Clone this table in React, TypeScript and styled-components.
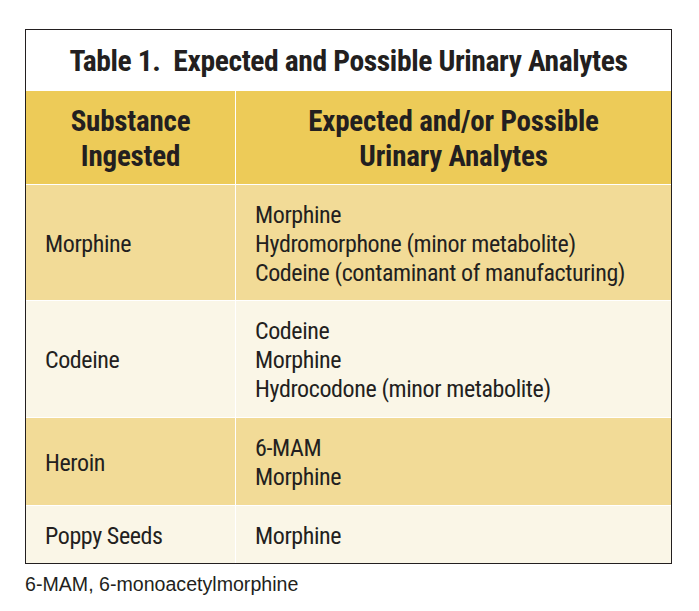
import React from "react";
import styled, { createGlobalStyle } from "styled-components";

const GlobalStyle = createGlobalStyle`
  html, body { margin: 0; padding: 0; background: #ffffff; }
  body { font-family: "Liberation Sans", Arial, sans-serif; color: #231f20; }
`;

const COND = `"Roboto Condensed", "Roboto", sans-serif`;

const Page = styled.div`
  padding: 29px 0 0 25px;
`;

const Figure = styled.div`
  width: 647px;
`;

const TableBox = styled.div`
  box-sizing: border-box;
  width: 647px;
  border: 1px solid #231f20;
  background: #ffffff;
`;

const Title = styled.div`
  height: 61px;
  display: flex;
  align-items: center;
  justify-content: center;
  font-family: ${COND};
  font-stretch: condensed;
  font-weight: 700;
  font-size: 29.6px;
  letter-spacing: -0.4px;
  white-space: pre;
  color: #231f20;
`;

const Grid = styled.div`
  display: grid;
  grid-template-columns: 209px minmax(0, 1fr);
  column-gap: 1px;
  row-gap: 1px;
  background: #ffffff;
`;

const HeadCell = styled.div`
  box-sizing: border-box;
  height: 93px;
  padding-top: 2px;
  background: #edcb58;
  display: flex;
  align-items: center;
  justify-content: center;
  text-align: center;
  font-family: ${COND};
  font-stretch: condensed;
  font-weight: 700;
  font-size: 29px;
  letter-spacing: -0.2px;
  line-height: 35px;
  color: #231f20;
`;

const Cell = styled.div<{ $h: number; $tone: "tan" | "cream" }>`
  box-sizing: border-box;
  height: ${(p) => p.$h}px;
  padding: 3px 0 0 19px;
  background: ${(p) => (p.$tone === "tan" ? "#f2db97" : "#faf6e7")};
  display: flex;
  flex-direction: column;
  justify-content: center;
  font-family: ${COND};
  font-stretch: condensed;
  font-size: 24px;
  letter-spacing: -0.4px;
  line-height: 29px;
  color: #231f20;
`;

const Line = styled.div`
  white-space: nowrap;
`;

const Footnote = styled.div`
  margin-top: 9px;
  font-family: "Liberation Sans", Arial, sans-serif;
  font-size: 19.6px;
  line-height: 23px;
  color: #231f20;
`;

type Row = { substance: string; analytes: string[]; h: number; tone: "tan" | "cream" };

const rows: Row[] = [
  {
    substance: "Morphine",
    analytes: ["Morphine", "Hydromorphone (minor metabolite)", "Codeine (contaminant of manufacturing)"],
    h: 115,
    tone: "tan",
  },
  {
    substance: "Codeine",
    analytes: ["Codeine", "Morphine", "Hydrocodone (minor metabolite)"],
    h: 116,
    tone: "cream",
  },
  { substance: "Heroin", analytes: ["6-MAM", "Morphine"], h: 87, tone: "tan" },
  { substance: "Poppy Seeds", analytes: ["Morphine"], h: 57, tone: "cream" },
];

export default function App() {
  return (
    <>
      <GlobalStyle />
      <Page>
        <Figure>
          <TableBox>
            <Title>{"Table 1.  Expected and Possible Urinary Analytes"}</Title>
            <Grid>
              <HeadCell>
                Substance
                <br />
                Ingested
              </HeadCell>
              <HeadCell>
                Expected and/or Possible
                <br />
                Urinary Analytes
              </HeadCell>
              {rows.map((r) => (
                <React.Fragment key={r.substance}>
                  <Cell $h={r.h} $tone={r.tone}>
                    <Line>{r.substance}</Line>
                  </Cell>
                  <Cell $h={r.h} $tone={r.tone}>
                    {r.analytes.map((a) => (
                      <Line key={a}>{a}</Line>
                    ))}
                  </Cell>
                </React.Fragment>
              ))}
            </Grid>
          </TableBox>
          <Footnote>6-MAM, 6-monoacetylmorphine</Footnote>
        </Figure>
      </Page>
    </>
  );
}
